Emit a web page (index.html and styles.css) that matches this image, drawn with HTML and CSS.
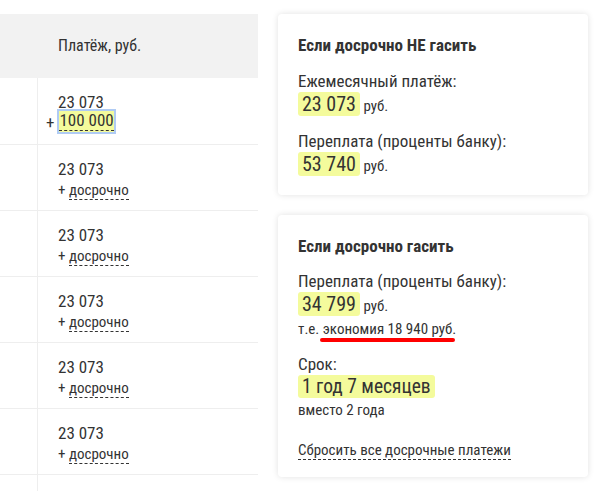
FILE: index.html
```html
<!DOCTYPE html>
<html lang="ru">
<head>
<meta charset="utf-8">
<link rel="stylesheet" href="styles.css">
</head>
<body>
<div class="page">
  <div class="table">
    <div class="thead">Платёж, руб.</div>
    <div class="row row-first">
      <div class="lead"></div>
      <div class="cell">
        <div class="pay">23 073</div>
        <div class="extra-input"><span class="plus">+</span><span class="input"><span class="dashed">100 000</span></span></div>
      </div>
    </div>
    <div class="row">
      <div class="lead"></div>
      <div class="cell"><div class="pay">23 073</div><div class="extra">+ <span class="dashed">досрочно</span></div></div>
    </div>
    <div class="row">
      <div class="lead"></div>
      <div class="cell"><div class="pay">23 073</div><div class="extra">+ <span class="dashed">досрочно</span></div></div>
    </div>
    <div class="row">
      <div class="lead"></div>
      <div class="cell"><div class="pay">23 073</div><div class="extra">+ <span class="dashed">досрочно</span></div></div>
    </div>
    <div class="row">
      <div class="lead"></div>
      <div class="cell"><div class="pay">23 073</div><div class="extra">+ <span class="dashed">досрочно</span></div></div>
    </div>
    <div class="row">
      <div class="lead"></div>
      <div class="cell"><div class="pay">23 073</div><div class="extra">+ <span class="dashed">досрочно</span></div></div>
    </div>
    <div class="row row-empty">
      <div class="lead"></div>
      <div class="cell"></div>
    </div>
  </div>

  <div class="side">
    <div class="card card-a">
      <div class="title">Если досрочно НЕ гасить</div>
      <div class="label">Ежемесячный платёж:</div>
      <div class="value"><span class="hl">23 073</span> <span class="unit">руб.</span></div>
      <div class="label">Переплата (проценты банку):</div>
      <div class="value value-last"><span class="hl">53 740</span> <span class="unit">руб.</span></div>
    </div>
    <div class="card card-b">
      <div class="title">Если досрочно гасить</div>
      <div class="label">Переплата (проценты банку):</div>
      <div class="value value-tight"><span class="hl">34 799</span> <span class="unit">руб.</span></div>
      <div class="note note-saving">т.е. <span class="saving">экономия 18 940 руб.</span></div>
      <div class="label label-term">Срок:</div>
      <div class="value value-tight"><span class="hl term">1 год 7 месяцев</span></div>
      <div class="note note-instead">вместо 2 года</div>
      <div class="reset"><span class="dashed">Сбросить все досрочные платежи</span></div>
    </div>
  </div>
</div>
</body>
</html>
```

FILE: styles.css
```css
* { box-sizing: border-box; }
html, body { margin: 0; padding: 0; background: #fff; }
body {
  font-family: "Roboto", "Liberation Sans", sans-serif;
  font-stretch: 80%;
  color: #333;
  width: 610px;
  height: 492px;
  overflow: hidden;
}
.page {
  display: flex;
  align-items: flex-start;
  padding-top: 14px;
}
.table {
  width: 258px;
  flex: none;
}
.thead {
  height: 64px;
  background: #f2f2f2;
  padding-left: 58px;
  font-size: 16px;
  line-height: 64px;
}
.row {
  display: flex;
  height: 66px;
  border-bottom: 1px solid #eeeeee;
}
.row-first { height: 67px; }
.row-empty { border-bottom: none; height: 16px; }
.lead {
  width: 38px;
  border-right: 1px solid #eeeeee;
  flex: none;
}
.cell {
  padding: 13px 0 0 20px;
}
.pay {
  font-size: 17px;
  line-height: 22px;
}
.extra {
  font-size: 15px;
  line-height: 20px;
}
.extra-input {
  margin-left: -12px;
  margin-top: -4px;
  display: flex;
  align-items: center;
  font-size: 17px;
}
.plus { margin-right: 3px; line-height: 24px; }
.input {
  display: inline-block;
  height: 25px;
  border: 2px solid #afcbf4;
  background: #f4fb9c;
  padding: 0;
  line-height: 19px;
}
.dashed {
  border-bottom: 1px dashed #333;
}

.side {
  margin-left: 20px;
  width: 310px;
  flex: none;
}
.card {
  background: #fff;
  border-radius: 4px;
  box-shadow: 0 0 6px rgba(0,0,0,0.12);
  padding: 20px 20px 0;
}
.card-a { height: 181px; }
.card-b { height: 262px; margin-top: 20px; }
.title {
  font-weight: 700;
  font-size: 17px;
  line-height: 22px;
  margin-bottom: 14px;
}
.card-b .title { margin-bottom: 13px; }
.label {
  font-size: 17px;
  line-height: 22px;
}
.value {
  font-size: 15px;
  line-height: 24px;
  height: 24px;
  margin-bottom: 14px;
}
.value-tight { margin-bottom: 0; }
.hl {
  background: #f4fb9c;
  border-radius: 3px;
  font-size: 20px;
  padding: 0 4px;
  display: inline-block;
  line-height: 24px;
}
.hl.term { font-size: 19.5px; line-height: 23px; }
.unit { font-size: 15px; }
.note {
  font-size: 15px;
  line-height: 20px;
}
.note-saving { margin-top: 3px; }
.note-instead { margin-top: 1px; }
.saving {
  position: relative;
}
.saving::after {
  content: "";
  position: absolute;
  left: -3px;
  right: 1px;
  bottom: -4px;
  height: 4px;
  border-radius: 2px;
  background: #f00;
}
.label-term { margin-top: 14px; }
.reset {
  margin-top: 20px;
  font-size: 15px;
  line-height: 20px;
}
```
